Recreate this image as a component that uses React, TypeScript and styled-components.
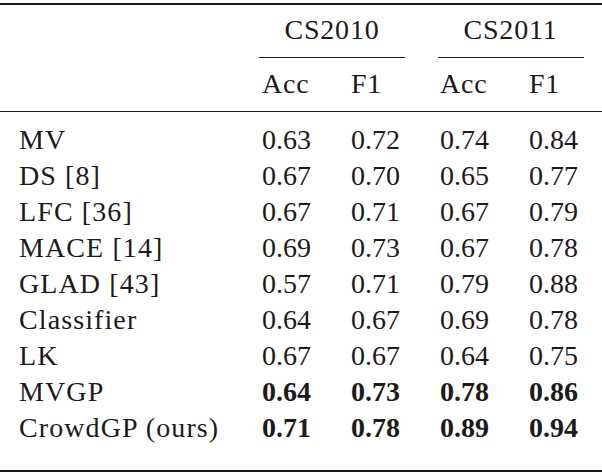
import React from 'react';
import styled, { createGlobalStyle } from 'styled-components';

const GlobalStyle = createGlobalStyle`
  body {
    margin: 0;
    background: #ffffff;
    font-family: "Liberation Serif", "Times New Roman", serif;
    color: #1c1a1a;
  }
`

const Table = styled.div`
  width: 602px;
  margin-top: 3px;
  border-top: 2px solid #1c1a1a;
  border-bottom: 2px solid #1c1a1a;
  font-size: 28px;
`

const Head = styled.div`
  padding-top: 7px;
  padding-bottom: 9px;
  border-bottom: 1px solid #1c1a1a;
`

const Body = styled.div`
  padding-top: 10px;
  padding-bottom: 24px;
`

const Row = styled.div`
  display: grid;
  grid-template-columns: 255px 89px 89px 89px 1fr;
  line-height: 36px;
  white-space: nowrap;
`

const Label = styled.div`
  padding-left: 19px;
  letter-spacing: 1.1px;
`

const Cell = styled.div<{ bold?: boolean }>`
  padding-left: 7px;
  font-weight: ${props => props.bold ? 'bold' : 'normal'};
`

const HeadCell = styled(Cell)`
  letter-spacing: 0.8px;
`

const Group = styled.div<{ start: number }>`
  grid-column: ${props => props.start} / span 2;
  display: flex;
  flex-direction: column;
`

const GroupTitle = styled.div<{ shift: number }>`
  text-align: center;
  letter-spacing: 0.8px;
  padding-right: ${props => props.shift}px;
`

type RuleProps = {
  left: number;
  right: number;
}

const CMidRule = styled.div<RuleProps>`
  height: 1px;
  background: #1c1a1a;
  margin: 9px ${props => props.right}px 0 ${props => props.left}px;
`

const SubHead = styled(Row)`
  margin-top: 7px;
  line-height: 37px;
`

type Result = {
  name: string;
  values: string[];
  bold?: boolean;
}

const RESULTS: Result[] = [
  { name: 'MV', values: ['0.63', '0.72', '0.74', '0.84'] },
  { name: 'DS [8]', values: ['0.67', '0.70', '0.65', '0.77'] },
  { name: 'LFC [36]', values: ['0.67', '0.71', '0.67', '0.79'] },
  { name: 'MACE [14]', values: ['0.69', '0.73', '0.67', '0.78'] },
  { name: 'GLAD [43]', values: ['0.57', '0.71', '0.79', '0.88'] },
  { name: 'Classifier', values: ['0.64', '0.67', '0.69', '0.78'] },
  { name: 'LK', values: ['0.67', '0.67', '0.64', '0.75'] },
  { name: 'MVGP', values: ['0.64', '0.73', '0.78', '0.86'], bold: true },
  { name: 'CrowdGP (ours)', values: ['0.71', '0.78', '0.89', '0.94'], bold: true },
]

const App = () => {
  return (
    <>
      <GlobalStyle />
      <Table>
        <Head>
          <Row>
            <Label />
            <Group start={2}>
              <GroupTitle shift={24}>CS2010</GroupTitle>
              <CMidRule left={4} right={28} />
            </Group>
            <Group start={4}>
              <GroupTitle shift={14}>CS2011</GroupTitle>
              <CMidRule left={5} right={18} />
            </Group>
          </Row>
          <SubHead>
            <Label />
            <HeadCell>Acc</HeadCell>
            <HeadCell>F1</HeadCell>
            <HeadCell>Acc</HeadCell>
            <HeadCell>F1</HeadCell>
          </SubHead>
        </Head>
        <Body>
          {RESULTS.map(r => (
            <Row key={r.name}>
              <Label>{r.name}</Label>
              {r.values.map((v, i) => (
                <Cell key={i} bold={r.bold}>{v}</Cell>
              ))}
            </Row>
          ))}
        </Body>
      </Table>
    </>
  )
};

export default App;
